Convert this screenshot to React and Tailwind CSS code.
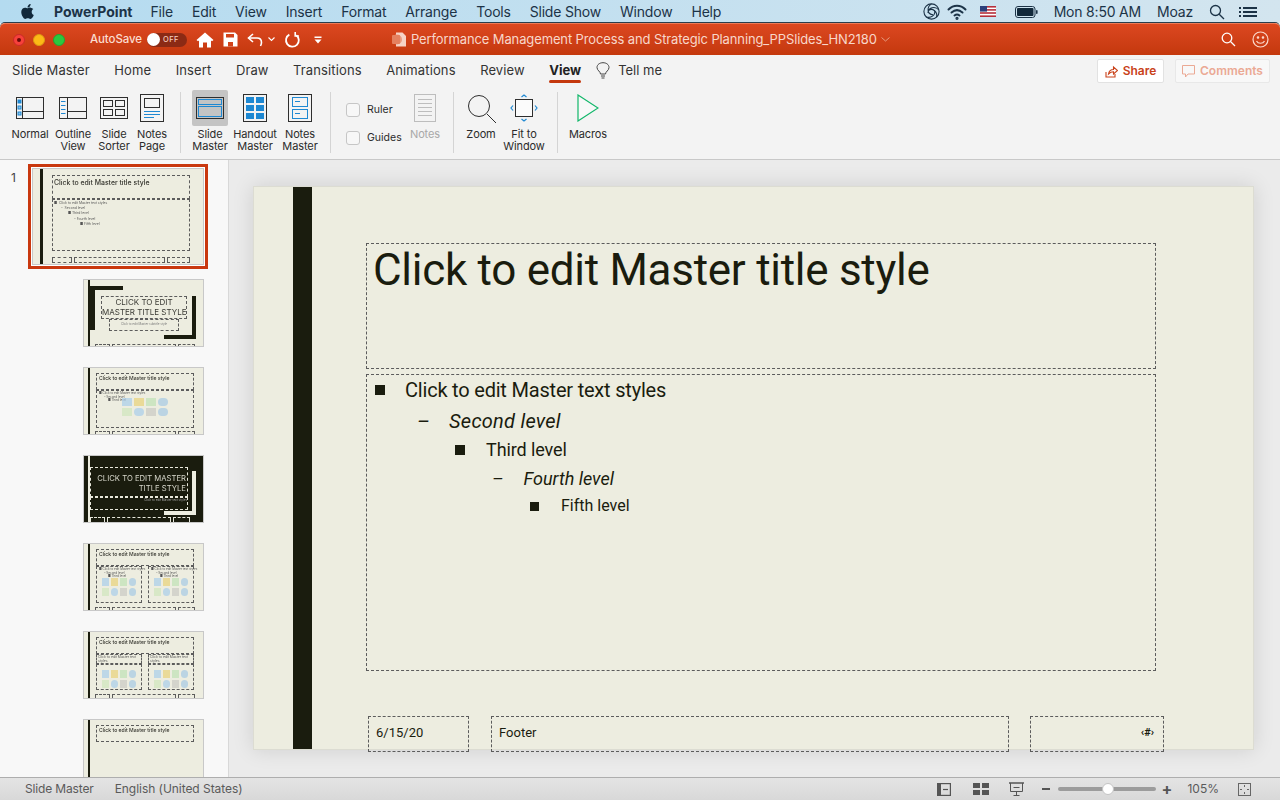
import React from "react";
import { FaApple } from "react-icons/fa";

const SANS = "font-['Inter','Liberation_Sans',sans-serif]";
const BLUE = "#1e88d2";
const DARK = "#2e2e2e";

const menuItems = ["File", "Edit", "View", "Insert", "Format", "Arrange", "Tools", "Slide Show", "Window", "Help"];
const tabs = ["Home", "Insert", "Draw", "Transitions", "Animations", "Review"];

const MenuBar = () => (
  <div className={`h-[23px] flex items-center bg-gradient-to-r from-[#b4dbf0] to-[#d3e5ef] text-[#1c3347] text-[14px] ${SANS}`}>
    <FaApple className="ml-[20px] w-[15px] h-[17px] text-[#12293b]" />
    <span className="ml-[19px] font-bold text-[14px]">PowerPoint</span>
    <div className="ml-[18px] flex gap-[19px] tracking-[-0.2px]">
      {menuItems.map((m) => (
        <span key={m}>{m}</span>
      ))}
    </div>
    <div className="ml-auto flex items-center mr-[23px]">
      {/* sync swirl */}
      <svg width="17" height="17" viewBox="0 0 17 17" fill="none" stroke="#1c3347" strokeWidth="1.1" className="mr-[7px]">
        <circle cx="8.5" cy="8.5" r="7.6" />
        <path d="M8.5 0.9 C3.5 4 4 11.5 10 11.8 M16 7 C12 2.5 5 4.5 5 10 M13.5 14.2 C15 9 9.5 4.5 5.5 7.5 M3 13.8 C7.5 15.5 13 12.5 11.5 7.5" />
      </svg>
      <svg width="20" height="16" viewBox="0 0 20 16" fill="none" stroke="#1c3347" strokeWidth="2" strokeLinecap="round" className="mr-[13px]">
        <path d="M1.5 5.5 C6.5 0.5 13.5 0.5 18.5 5.5" />
        <path d="M4.5 8.5 C8 5.5 12 5.5 15.5 8.5" />
        <path d="M7.5 11.5 C9 10.3 11 10.3 12.5 11.5" />
        <circle cx="10" cy="14.3" r="0.6" fill="#1c3347" />
      </svg>
      {/* flag */}
      <svg width="16" height="11" viewBox="0 0 16 11" className="mr-[19px]">
        <rect width="16" height="11" fill="#fff" />
        <rect y="0" width="16" height="1.6" fill="#b5303c" />
        <rect y="3.1" width="16" height="1.6" fill="#b5303c" />
        <rect y="6.2" width="16" height="1.6" fill="#b5303c" />
        <rect y="9.4" width="16" height="1.6" fill="#b5303c" />
        <rect width="7" height="5.6" fill="#2c3f7a" />
      </svg>
      <svg width="23" height="12" viewBox="0 0 23 12" className="mr-[16px]">
        <rect x="0.5" y="0.5" width="19.5" height="11" rx="2.5" fill="none" stroke="#1c3347" />
        <rect x="2" y="2" width="16.5" height="8" rx="1" fill="#12293b" />
        <rect x="21" y="4" width="1.6" height="4" rx="0.8" fill="#1c3347" />
      </svg>
      <span className="mr-[16px] tracking-[-0.2px]">Mon 8:50 AM</span>
      <span className="mr-[16px] tracking-[-0.2px]">Moaz</span>
      <svg width="16" height="16" viewBox="0 0 16 16" fill="none" stroke="#1c3347" strokeWidth="1.3" className="mr-[14px]">
        <circle cx="6.5" cy="6.5" r="5" />
        <path d="M10.2 10.2 L15 15" />
      </svg>
      <svg width="18" height="12" viewBox="0 0 18 12" fill="#1c3347">
        <rect x="0" y="1" width="2" height="2" />
        <rect x="4" y="1" width="14" height="2" />
        <rect x="0" y="5" width="2" height="2" />
        <rect x="4" y="5" width="14" height="2" />
        <rect x="0" y="9" width="2" height="2" />
        <rect x="4" y="9" width="14" height="2" />
      </svg>
    </div>
  </div>
);

const TitleBar = () => (
  <div className={`h-[32px] flex items-center rounded-t-[5px] border-t border-[#ee7a56] bg-gradient-to-b from-[#dc4820] to-[#c4380d] text-white shadow-[0_-1px_0_#2a3d4c] ${SANS}`}>
    <div className="ml-[13px] flex gap-[8px]">
      <div className="w-[12px] h-[12px] rounded-full bg-[#f7413b] border border-[#c92a28] flex items-center justify-center">
        <div className="w-[4px] h-[4px] rounded-full bg-[#6e0a08]" />
      </div>
      <div className="w-[12px] h-[12px] rounded-full bg-[#fdb916] border border-[#dd9a12]" />
      <div className="w-[12px] h-[12px] rounded-full bg-[#2bc83f] border border-[#22a632]" />
    </div>
    <span className="ml-[25px] text-[11.5px] text-[#fbdccf] font-medium tracking-[-0.1px]">AutoSave</span>
    <div className="ml-[5px] w-[40px] h-[14px] rounded-full bg-[#8b2a14] flex items-center">
      <div className="w-[13px] h-[13px] rounded-full bg-white" />
      <span className="ml-[3px] text-[7.5px] text-[#f5cdbf] font-medium tracking-[0.5px]">OFF</span>
    </div>
    <svg width="18" height="16" viewBox="0 0 18 16" fill="#fff" className="ml-[9px]">
      <path d="M9 0.5 L17.5 8 L16 9.3 L15 8.5 V15.5 H11 V10.5 H7 V15.5 H3 V8.5 L2 9.3 L0.5 8 Z" />
    </svg>
    <svg width="15" height="15" viewBox="0 0 15 15" className="ml-[9px]">
      <path d="M0.5 0.5 H12 L14.5 3 V14.5 H0.5 Z" fill="#fff" />
      <rect x="3" y="2" width="8" height="3.5" fill="#d2431a" />
      <rect x="5" y="10" width="5" height="4.5" fill="#d2431a" />
    </svg>
    <svg width="16" height="14" viewBox="0 0 16 14" fill="none" stroke="#fff" strokeWidth="1.6" className="ml-[9px]">
      <path d="M6 1 L1.5 5 L6 9" />
      <path d="M1.5 5 H10 C13 5 14.5 7 14.5 9.5 C14.5 11 14 12 13.5 13" />
    </svg>
    <svg width="7" height="5" viewBox="0 0 7 5" fill="none" stroke="#fff" strokeWidth="1.1" className="ml-[5px]">
      <path d="M0.5 0.5 L3.5 3.5 L6.5 0.5" />
    </svg>
    <svg width="16" height="16" viewBox="0 0 15 15" fill="none" stroke="#fff" strokeWidth="1.7" className="ml-[9px]">
      <path d="M5 2.5 A6 6 0 1 0 11.5 3" />
      <path d="M10.5 0 V3.7 H14" strokeWidth="1.5" />
    </svg>
    <svg width="8" height="8" viewBox="0 0 8 8" fill="#fff" className="ml-[14px]">
      <rect x="0.5" y="0.5" width="7" height="1.5" />
      <path d="M0.5 3.5 H7.5 L4 7.5 Z" />
    </svg>
    <svg width="15" height="15" viewBox="0 0 15 15" className="ml-[70px]">
      <path d="M4 0.5 H10.5 L14 4 V14.5 H4 Z" fill="#f6d3c6" />
      <circle cx="5" cy="7.5" r="5" fill="#ea9a7f" />
      <rect x="0" y="3" width="8" height="9" rx="1" fill="#e5805f" />
    </svg>
    <span className="ml-[4px] text-[13px] text-[#f8d7ca] tracking-[-0.12px] whitespace-nowrap">Performance Management Process and Strategic Planning_PPSlides_HN2180</span>
    <svg width="9" height="5" viewBox="0 0 9 5" fill="none" stroke="#e59b80" strokeWidth="1" className="ml-[4px]">
      <path d="M0.5 0.5 L4.5 4 L8.5 0.5" />
    </svg>
    <div className="ml-auto flex items-center">
      <svg width="15" height="15" viewBox="0 0 15 15" fill="none" stroke="#fff" strokeWidth="1.3" className="mr-[16px]">
        <circle cx="6" cy="6" r="4.8" />
        <path d="M9.5 9.5 L14 14" />
      </svg>
      <svg width="17" height="17" viewBox="0 0 17 17" fill="none" stroke="#fbd9cc" strokeWidth="1.2" className="mr-[11px]">
        <circle cx="8.5" cy="8.5" r="7.5" />
        <circle cx="6" cy="6.5" r="0.7" fill="#fff" />
        <circle cx="11" cy="6.5" r="0.7" fill="#fff" />
        <path d="M4.5 10 C6 13 11 13 12.5 10" />
      </svg>
    </div>
  </div>
);

const TabRow = () => (
  <div className={`h-[32px] flex items-center bg-[#f3f3f3] text-[13px] text-[#333] ${SANS}`}>
    <div className="ml-[12px] flex gap-[24.5px] tracking-[0.12px]">
      <span>Slide Master</span>
      {tabs.map((t) => (
        <span key={t}>{t}</span>
      ))}
      <span className="relative font-bold text-[#222] tracking-normal">
        View
        <span className="absolute left-0 right-0 top-[19px] h-[3px] rounded-full bg-[#c4380d]" />
      </span>
    </div>
    <svg width="14" height="18" viewBox="0 0 14 18" fill="none" stroke="#444" strokeWidth="1" className="ml-[15px]">
      <path d="M4.5 12 C4.5 9.5 1 8.5 1 5.5 C1 2.5 3.8 0.7 7 0.7 C10.2 0.7 13 2.5 13 5.5 C13 8.5 9.5 9.5 9.5 12 Z" />
      <path d="M5 14 H9 M5.5 16 H8.5" />
    </svg>
    <span className="ml-[8px]">Tell me</span>
    <div className="ml-auto flex items-center gap-[11px] mr-[10px] text-[12px] font-semibold">
      <div className="h-[24px] w-[67px] flex items-center justify-center gap-[5px] bg-white border border-[#e2e2e2] rounded-[2px] text-[#c9421a]">
        <svg width="13" height="13" viewBox="0 0 13 13" fill="none" stroke="#c9421a" strokeWidth="1.1">
          <path d="M1 7 V12 H10 V9" />
          <path d="M3.5 9 C4 6 6 4.5 8.5 4.5 V2 L12.5 5.5 L8.5 9 V6.8 C6.5 6.8 5 7.5 3.5 9 Z" />
        </svg>
        Share
      </div>
      <div className="h-[24px] w-[95px] flex items-center justify-center gap-[5px] bg-[#f8f8f8] border border-[#e8e8e8] rounded-[2px] text-[#eba994]">
        <svg width="13" height="13" viewBox="0 0 13 13" fill="none" stroke="#eba994" strokeWidth="1">
          <path d="M0.5 0.5 H12.5 V9 H6 L3.5 12 V9 H0.5 Z" />
        </svg>
        Comments
      </div>
    </div>
  </div>
);

const RibbonBtn = ({ className, lines, children, active, gray }) => (
  <div className={`flex flex-col items-center shrink-0 ${className}`}>
    <div className={`h-[36px] w-[36px] flex items-center justify-center rounded-[2px] ${active ? "bg-[#c4c4c4]" : ""}`}>
      {children}
    </div>
    <div className={`mt-[2px] text-[11px] leading-[12px] text-center whitespace-nowrap tracking-[-0.1px] ${gray ? "text-[#a8a8a8]" : "text-[#2b2b2b]"}`}>
      {lines.map((l) => (
        <div key={l}>{l}</div>
      ))}
    </div>
  </div>
);

const Sep = ({ className }) => <div className={`w-px h-[61px] mt-[2px] bg-[#d4d4d4] shrink-0 ${className}`} />;

const Check = ({ label, className }) => (
  <div className={`flex items-center ${className}`}>
    <div className="w-[14px] h-[14px] rounded-[3px] bg-[#f7f7f7] border border-[#c6c6c6]" />
    <span className="ml-[7px] text-[10.5px] leading-[12px] text-[#2b2b2b]">{label}</span>
  </div>
);

const Ribbon = () => (
  <div className={`h-[73px] flex pt-[3px] pl-[10px] bg-[#f3f3f3] border-b border-[#c8c8c8] ${SANS}`}>
    <RibbonBtn className="w-[40px]" lines={["Normal"]}>
      <svg width="28" height="22" viewBox="0 0 28 22" fill="none" stroke={DARK}>
        <rect x="0.5" y="0.5" width="27" height="21" />
        <path d="M6.5 0.5 V21.5 M6.5 14.5 H27.5" />
        <g stroke={BLUE} fill="#8cc4ea">
          <rect x="2" y="3" width="3" height="3" fill={BLUE} />
          <rect x="2" y="9" width="3" height="3" />
          <rect x="2" y="15" width="3" height="3" />
        </g>
      </svg>
    </RibbonBtn>
    <RibbonBtn className="w-[46px]" lines={["Outline", "View"]}>
      <svg width="28" height="22" viewBox="0 0 28 22" fill="none" stroke={DARK}>
        <rect x="0.5" y="0.5" width="27" height="21" />
        <path d="M8.5 0.5 V21.5 M8.5 14.5 H27.5" />
        <path d="M2 4.5 H6.5 M2 8.5 H6.5 M2 12.5 H6.5 M2 16.5 H6.5" stroke={BLUE} />
      </svg>
    </RibbonBtn>
    <RibbonBtn className="w-[36px]" lines={["Slide", "Sorter"]}>
      <svg width="28" height="22" viewBox="0 0 28 22" fill="none" stroke={DARK}>
        <rect x="0.5" y="0.5" width="27" height="21" />
        <rect x="3.5" y="3.5" width="9" height="6" />
        <rect x="15.5" y="3.5" width="9" height="6" />
        <rect x="3.5" y="12.5" width="9" height="6" />
        <rect x="15.5" y="12.5" width="9" height="6" />
      </svg>
    </RibbonBtn>
    <RibbonBtn className="w-[40px]" lines={["Notes", "Page"]}>
      <svg width="24" height="28" viewBox="0 0 24 28" fill="none" stroke={DARK}>
        <rect x="0.5" y="0.5" width="23" height="27" />
        <rect x="4.5" y="4.5" width="15" height="9" />
        <path d="M4 17.5 H20 M4 20.5 H20 M4 23.5 H14" stroke={BLUE} />
      </svg>
    </RibbonBtn>
    <Sep className="ml-[8px]" />
    <RibbonBtn className="w-[36px] ml-[11px]" lines={["Slide", "Master"]} active>
      <svg width="28" height="22" viewBox="0 0 28 22" fill="none" stroke={DARK}>
        <rect x="0.5" y="0.5" width="27" height="21" />
        <rect x="2.5" y="2.5" width="23" height="5" stroke={BLUE} />
        <rect x="2.5" y="9.5" width="23" height="10" stroke={BLUE} />
      </svg>
    </RibbonBtn>
    <RibbonBtn className="w-[54px]" lines={["Handout", "Master"]}>
      <svg width="24" height="28" viewBox="0 0 24 28" fill="none" stroke={DARK}>
        <rect x="0.5" y="0.5" width="23" height="27" />
        <g fill={BLUE} stroke="none">
          <rect x="3" y="3" width="8" height="6" />
          <rect x="13" y="3" width="8" height="6" />
          <rect x="3" y="11" width="8" height="6" />
          <rect x="13" y="11" width="8" height="6" />
          <rect x="3" y="19" width="8" height="6" />
          <rect x="13" y="19" width="8" height="6" />
        </g>
      </svg>
    </RibbonBtn>
    <RibbonBtn className="w-[36px]" lines={["Notes", "Master"]}>
      <svg width="24" height="28" viewBox="0 0 24 28" fill="none" stroke={DARK}>
        <rect x="0.5" y="0.5" width="23" height="27" />
        <g stroke={BLUE}>
          <rect x="4.5" y="3.5" width="15" height="9" />
          <rect x="4.5" y="15.5" width="15" height="9" />
          <path d="M7 7.5 H12 M7 19.5 H12" />
        </g>
      </svg>
    </RibbonBtn>
    <Sep className="ml-[12px]" />
    <div className="ml-[15px] w-[58px] shrink-0">
      <Check label="Ruler" className="mt-[13px]" />
      <Check label="Guides" className="mt-[14px]" />
    </div>
    <RibbonBtn className="w-[42px]" lines={["Notes"]} gray>
      <svg width="22" height="28" viewBox="0 0 22 28" fill="none" stroke="#bdbdbd">
        <rect x="0.5" y="0.5" width="21" height="27" />
        <path d="M4 5.5 H18 M4 9.5 H18 M4 13.5 H18 M4 17.5 H18 M4 21.5 H18" />
      </svg>
    </RibbonBtn>
    <Sep className="ml-[7px]" />
    <RibbonBtn className="w-[40px] ml-[7px]" lines={["Zoom"]}>
      <svg width="30" height="30" viewBox="0 0 30 30" fill="none" stroke={DARK} strokeWidth="1" className="translate-x-[1px] translate-y-[1px]">
        <circle cx="12" cy="12" r="10.5" />
        <path d="M20 20 L29 29" />
      </svg>
    </RibbonBtn>
    <RibbonBtn className="w-[46px]" lines={["Fit to", "Window"]}>
      <svg width="28" height="28" viewBox="0 0 28 28" fill="none" stroke={BLUE} strokeWidth="1.2">
        <rect x="5.5" y="5.5" width="17" height="17" stroke={DARK} strokeWidth="1" fill="#fbfbfb" />
        <path d="M11.5 3 L14 1 L16.5 3 M11.5 25 L14 27 L16.5 25 M3 11.5 L1 14 L3 16.5 M25 11.5 L27 14 L25 16.5" />
      </svg>
    </RibbonBtn>
    <Sep className="ml-[10px]" />
    <RibbonBtn className="w-[50px] ml-[5px]" lines={["Macros"]}>
      <svg width="22" height="28" viewBox="0 0 22 28" fill="#f8f8f8" stroke="#12b76a" strokeWidth="1.2">
        <path d="M1 1 L21 14 L1 27 Z" />
      </svg>
    </RibbonBtn>
  </div>
);

// dotted placeholder frame, used on the big slide and on the thumbnails
const Dash = ({ className = "", light, children }) => (
  <div className={`border border-dashed shrink-0 ${light ? "border-[#e8e8dc]" : "border-[#5c5c5c]"} ${className}`}>
    {children}
  </div>
);

const Footers = ({ light, className = "" }) => (
  <div className={`flex gap-[2px] ml-[-1px] ${className}`}>
    <Dash light={light} className="w-[15px] h-[6px]" />
    <Dash light={light} className="w-[64px] h-[6px]" />
    <Dash light={light} className="w-[17px] h-[6px]" />
  </div>
);

// faded clip art in the small thumbnails
const ClipArt = ({ className = "" }) => (
  <div className={`grid grid-cols-4 gap-x-[2px] gap-y-[2px] opacity-70 ${className}`}>
    <div className="h-[8px] bg-[#a9cdea]" />
    <div className="h-[8px] bg-[#e8d27a]" />
    <div className="h-[8px] bg-[#bfe2b6]" />
    <div className="h-[8px] rounded-full bg-[#a5c9e4]" />
    <div className="h-[8px] bg-[#cfe5bc]" />
    <div className="h-[8px] rounded-full bg-[#a9cdea]" />
    <div className="h-[8px] bg-[#c9c9c4]" />
    <div className="h-[8px] rounded-full bg-[#a5c9e4]" />
  </div>
);

const Mini = ({ children, className = "bg-[#edede0]", bar = "bg-[#1a1c0e]" }) => (
  <div className={`ml-[83px] w-[121px] h-[68px] border border-[#c8c8c8] overflow-hidden shrink-0 ${className}`}>
    <div className="flex w-full h-full blur-[0.35px]">
      <div className={`ml-[4px] w-[2px] h-full shrink-0 ${bar}`} />
      <div className="relative flex-1 min-w-0 flex flex-col">{children}</div>
    </div>
  </div>
);

const ThumbTitle = () => (
  <Dash className="w-[98px] h-[17px] ml-[6px] mt-[5px] pl-[2px] text-[5.1px] leading-[8px] whitespace-nowrap text-[#33332c] font-medium">
    Click to edit Master title style
  </Dash>
);

const TinyLines = () => (
  <div className="text-[3px] leading-[3.6px] text-[#555] whitespace-nowrap pl-[2px] pt-[1px]">
    <div>■ Click to edit Master text styles</div>
    <div className="pl-[5px]">– Second level</div>
    <div className="pl-[9px]">■ Third level</div>
  </div>
);

const Thumbs = () => (
  <div className={`w-[229px] shrink-0 bg-[#f8f8f8] border-r border-[#d8d8d8] overflow-hidden flex flex-col gap-[20px] ${SANS}`}>
    <div className="mt-[4px] h-[95px] shrink-0 flex items-start">
      <span className="ml-[11px] mt-[5px] w-[17px] text-[12px] text-[#444]">1</span>
      <div className="w-[180px] h-[105px] shrink-0 border-[3px] border-[#c9380f] bg-white p-px">
        <div className="w-full h-full bg-[#edede0] border border-[#c8c8c8] overflow-hidden">
          <div className="flex w-full h-full text-[#33332c] blur-[0.35px]">
            <div className="ml-[7px] w-[3px] h-full bg-[#1a1c0e] shrink-0" />
            <div className="ml-[9px] flex flex-col pt-[6px]">
              <Dash className="w-[138px] h-[24px] text-[6.9px] leading-[14px] pl-[1px] whitespace-nowrap font-medium">
                Click to edit Master title style
              </Dash>
              <Dash className="w-[138px] h-[52px] text-[3.4px] leading-[5.2px] whitespace-nowrap text-[#555] pt-px pl-[1px]">
                <div>■ &nbsp;Click to edit Master text styles</div>
                <div className="pl-[7px]">– &nbsp;Second level</div>
                <div className="pl-[14px]">■ Third level</div>
                <div className="pl-[20px]">– Fourth level</div>
                <div className="pl-[26px]">■ Fifth level</div>
              </Dash>
              <div className="mt-[6px] flex gap-[2px]">
                <Dash className="w-[20px] h-[6px]" />
                <Dash className="w-[91px] h-[6px]" />
                <Dash className="w-[23px] h-[6px]" />
              </div>
            </div>
          </div>
        </div>
      </div>
    </div>
    <Mini>
      <div className="absolute left-0 top-[6px] w-[5px] h-[44px] bg-[#1a1c0e]" />
      <div className="absolute left-0 top-[6px] w-[33px] h-[4px] bg-[#1a1c0e]" />
      <div className="absolute left-[102px] top-[16px] w-[4px] h-[43px] bg-[#1a1c0e]" />
      <div className="absolute left-[74px] top-[55px] w-[32px] h-[4px] bg-[#1a1c0e]" />
      <Dash className="w-[86px] h-[23px] ml-[11px] mt-[16px] text-[8px] leading-[9.5px] text-center text-[#3a3a34] whitespace-nowrap pt-px">
        CLICK TO EDIT<br />MASTER TITLE STYLE
      </Dash>
      <Dash className="w-[70px] h-[12px] ml-[19px] text-[3px] text-center text-[#777] leading-[8px]">
        Click to edit Master subtitle style
      </Dash>
      <Footers className="mt-[13px] ml-[5px]" />
    </Mini>
    <Mini>
      <ThumbTitle />
      <Dash className="w-[98px] h-[38px] ml-[6px] relative">
        <TinyLines />
        <ClipArt className="absolute left-[25px] top-[7px] w-[46px]" />
      </Dash>
      <Footers className="mt-[3px] ml-[5px]" />
    </Mini>
    <Mini className="bg-[#1a1c0e]" bar="bg-[#edede0]">
      <div className="absolute left-[102px] top-[15px] w-[4px] h-[44px] bg-[#edede0]" />
      <div className="absolute left-[74px] top-[55px] w-[32px] h-[4px] bg-[#edede0]" />
      <Dash light className="w-[98px] h-[30px] mt-[11px] pt-[6px] pr-px text-[7.7px] leading-[9.5px] text-right text-[#d8d8cc] whitespace-nowrap">
        CLICK TO EDIT MASTER<br />TITLE STYLE
      </Dash>
      <Dash light className="w-[98px] h-[13px] text-[3px] text-right text-[#aaa] leading-[5px]">
        Click to edit Master text styles
      </Dash>
      <Footers light className="mt-[7px] ml-[0px]" />
    </Mini>
    <Mini>
      <ThumbTitle />
      <div className="flex gap-[6px] ml-[6px]">
        <Dash className="w-[46px] h-[37px] relative">
          <TinyLines />
          <ClipArt className="absolute left-[5px] top-[11px] w-[34px]" />
        </Dash>
        <Dash className="w-[46px] h-[37px] relative">
          <TinyLines />
          <ClipArt className="absolute left-[5px] top-[11px] w-[34px]" />
        </Dash>
      </div>
      <Footers className="mt-[4px] ml-[5px]" />
    </Mini>
    <Mini>
      <ThumbTitle />
      <div className="grid grid-cols-[46px_46px] gap-x-[6px] ml-[6px]">
        <Dash className="h-[10px] text-[3.4px] leading-[4.4px] text-[#555] pl-px">Click to edit Master text styles</Dash>
        <Dash className="h-[10px] text-[3.4px] leading-[4.4px] text-[#555] pl-px">Click to edit Master text styles</Dash>
        <Dash className="h-[26px] relative">
          <ClipArt className="absolute left-[5px] top-[5px] w-[34px]" />
        </Dash>
        <Dash className="h-[26px] relative">
          <ClipArt className="absolute left-[5px] top-[5px] w-[34px]" />
        </Dash>
      </div>
      <Footers className="mt-[4px] ml-[5px]" />
    </Mini>
    <Mini>
      <ThumbTitle />
    </Mini>
  </div>
);

const Bullet = ({ className }) => <span className={`bg-[#1a1c0e] shrink-0 ${className}`} />;

const Slide = () => (
  <div className="w-[1001px] h-[564px] flex pl-[39px] bg-[#edede0] border border-[#dcdcd2] shrink-0 text-[#1a1c0e] shadow-[0_0_20px_rgba(0,0,0,0.12)] font-['Roboto','Liberation_Sans',sans-serif]">
    <div className="w-[19px] h-full bg-[#1a1c0e] shrink-0" />
    <div className="ml-[54px] pt-[56px] flex flex-col">
      <Dash className="w-[790px] h-[126px] pl-[6px] text-[44px] leading-[52px] whitespace-nowrap tracking-[-0.28px]">
        Click to edit Master title style
      </Dash>
      <Dash className="w-[790px] h-[297px] mt-[5px] pt-[3px] flex flex-col whitespace-nowrap">
        <div className="pl-[8px] flex items-center gap-[20px] text-[20px] leading-[24px] tracking-[-0.2px]">
          <Bullet className="w-[10px] h-[10px]" />
          Click to edit Master text styles
        </div>
        <div className="mt-[7px] pl-[50px] flex gap-[19px] italic text-[20px] leading-[24px] tracking-[0.25px]">
          <span>–</span>Second level
        </div>
        <div className="mt-[6px] pl-[88px] flex items-center gap-[21px] text-[18px] leading-[22px] tracking-[-0.1px]">
          <Bullet className="w-[10px] h-[10px]" />
          Third level
        </div>
        <div className="mt-[7px] pl-[125px] flex gap-[20px] italic text-[18px] leading-[22px]">
          <span>–</span>Fourth level
        </div>
        <div className="mt-[6px] pl-[163px] flex items-center gap-[22px] text-[16px] leading-[20px]">
          <Bullet className="w-[9px] h-[9px]" />
          Fifth level
        </div>
      </Dash>
      <div className="mt-[45px] ml-[2px] flex gap-[22px] text-[13px] leading-[16px]">
        <Dash className="w-[101px] h-[36px] pl-[7px] pt-[8px]">6/15/20</Dash>
        <Dash className="w-[518px] h-[36px] pl-[7px] pt-[8px]">Footer</Dash>
        <Dash className="w-[134px] h-[36px] ml-[-1px] pr-[9px] pt-[8px] text-right text-[11px] font-bold">‹#›</Dash>
      </div>
    </div>
  </div>
);

const StatusBar = () => (
  <div className={`h-[23px] flex items-center bg-gradient-to-b from-[#e4e4e4] to-[#d8d8d8] border-t border-[#aeaeae] text-[12px] text-[#5a5a5a] ${SANS}`}>
    <span className="ml-[25px] tracking-[-0.15px]">Slide Master</span>
    <span className="ml-[21px] tracking-[-0.05px]">English (United States)</span>
    <div className="ml-auto flex items-center mr-[29px]">
      <svg width="14" height="13" viewBox="0 0 14 13" fill="none" stroke="#555" strokeWidth="1.2">
        <rect x="0.6" y="0.6" width="12.8" height="11.8" />
        <rect x="0" y="0" width="4" height="13" fill="#555" stroke="none" />
        <path d="M6 6.5 H11" />
      </svg>
      <svg width="16" height="12" viewBox="0 0 16 12" fill="#555" className="ml-[22px]">
        <rect x="0" y="0" width="7" height="5" />
        <rect x="9" y="0" width="7" height="5" />
        <rect x="0" y="7" width="7" height="5" />
        <rect x="9" y="7" width="7" height="5" />
      </svg>
      <svg width="15" height="14" viewBox="0 0 15 14" fill="none" stroke="#555" className="ml-[20px]">
        <path d="M0 1 H15" strokeWidth="1.5" />
        <path d="M1.5 1 V9.5 H13.5 V1 M7.5 9.5 V13 M4.5 13.5 H10.5 M4.5 5.5 H10.5" />
      </svg>
      <div className="ml-[18px] w-[8px] h-[2px] bg-[#555]" />
      <div className="relative ml-[8px] w-[98px] h-[4px] rounded-full bg-[#9c9c9c]">
        <div className="absolute left-[44px] top-[-4px] w-[12px] h-[12px] rounded-full bg-white border border-[#c4c4c4]" />
      </div>
      <span className="ml-[6px] text-[#555] text-[16px] leading-[16px] font-bold">+</span>
      <span className="ml-[15px] text-[#5a5a5a]">105%</span>
      <svg width="13" height="13" viewBox="0 0 13 13" fill="none" stroke="#666" className="ml-[19px]">
        <rect x="0.5" y="0.5" width="12" height="12" />
        <path d="M6.5 2 V4 M6.5 9 V11 M2 6.5 H4 M9 6.5 H11" />
      </svg>
    </div>
  </div>
);

export default function App() {
  return (
    <div className="w-[1280px] h-[800px] overflow-hidden flex flex-col bg-[#f3f3f3]">
      <MenuBar />
      <TitleBar />
      <TabRow />
      <Ribbon />
      <div className="flex-1 min-h-0 flex">
        <Thumbs />
        <div className="flex-1 overflow-hidden pt-[26px] pl-[24px] bg-[#ebebeb]">
          <Slide />
        </div>
      </div>
      <StatusBar />
    </div>
  );
}
